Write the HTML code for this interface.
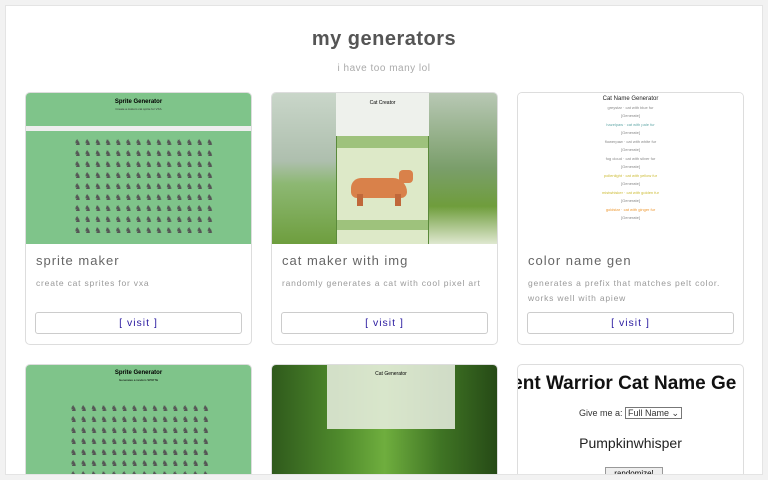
<!DOCTYPE html>
<html><head><style>
*{box-sizing:border-box;margin:0;padding:0}
html,body{width:768px;height:480px;overflow:hidden}
body{background:#f2f2f2;font-family:"Liberation Sans",sans-serif;position:relative}
.wrap{position:absolute;left:5px;top:5px;width:758px;height:470px;background:#fff;border:1px solid #e4e4e4;overflow:hidden}
h1{position:absolute;top:22px;left:0;width:100%;text-align:center;font-size:20px;color:#555;font-weight:bold;letter-spacing:0.5px}
.sub{position:absolute;top:57px;left:0;width:100%;text-align:center;font-size:10px;color:#aaa;letter-spacing:0.5px}
.card{position:absolute;width:227px;height:253px;border:1px solid #ddd;border-radius:5px;overflow:hidden;background:#fff}
.img{position:absolute;left:0;top:0;width:100%;height:151px;overflow:hidden}
.t{position:absolute;left:10px;top:160px;font-size:13px;color:#666;letter-spacing:1px}
.d{position:absolute;left:10px;top:183px;width:205px;font-size:8.5px;color:#999;letter-spacing:0.8px;line-height:15px}
.b{position:absolute;left:9px;top:219px;width:207px;height:22px;border:1px solid #ccc;border-radius:3px;text-align:center;line-height:20px;font-size:10.5px;color:#2a1aa0;letter-spacing:1px}
.sp{position:absolute;font-size:8px;color:#555;letter-spacing:3px;line-height:11px;white-space:pre}
</style></head><body>
<div class="wrap">
<h1>my generators</h1>
<div class="sub">i have too many lol</div>

<div class="card" style="left:19px;top:86px">
 <div class="img" style="background:#7fc48a">
  <div style="text-align:center;font-size:6px;font-weight:bold;margin-top:6px">Sprite Generator</div>
  <div style="text-align:center;font-size:3px;color:#333;margin-top:2px">Create a custom cat sprite for VXA</div>
  <div style="position:absolute;top:33px;left:0;width:100%;height:5px;background:#eee"></div>
  <div class="sp" style="left:48px;top:44px">♞♞♞♞♞♞♞♞♞♞♞♞♞♞
♞♞♞♞♞♞♞♞♞♞♞♞♞♞
♞♞♞♞♞♞♞♞♞♞♞♞♞♞
♞♞♞♞♞♞♞♞♞♞♞♞♞♞
♞♞♞♞♞♞♞♞♞♞♞♞♞♞
♞♞♞♞♞♞♞♞♞♞♞♞♞♞
♞♞♞♞♞♞♞♞♞♞♞♞♞♞
♞♞♞♞♞♞♞♞♞♞♞♞♞♞
♞♞♞♞♞♞♞♞♞♞♞♞♞♞</div>
 </div>
 <div class="t">sprite maker</div>
 <div class="d">create cat sprites for vxa</div>
 <div class="b">[ visit ]</div>
</div>

<div class="card" style="left:265px;top:86px">
 <div class="img" style="background:linear-gradient(#c9d6c9 0%,#aebfae 45%,#8db873 60%,#6e9e3e 100%)">
  <div style="position:absolute;left:156px;top:0;width:70px;height:151px;background:linear-gradient(#b8c8b4,#7a9e6a 50%,#6f9d3c 75%,#dfe8d0)"></div>
  <div style="position:absolute;left:64px;top:0;width:93px;height:43px;background:#eef1ec;text-align:center;font-size:5px;padding-top:7px">Cat Creator</div>
  <div style="position:absolute;left:64px;top:43px;width:93px;height:108px;background:#dde9c8;border-left:1px solid #5a8a3a;border-right:1px solid #5a8a3a">
   <div style="height:12px;background:#9ec27c"></div>
   <div style="position:absolute;left:14px;top:42px;width:56px;height:20px;background:#d9814a;border-radius:10px 14px 6px 6px"></div>
   <div style="position:absolute;left:62px;top:34px;width:14px;height:13px;background:#d9814a;border-radius:4px"></div>
   <div style="position:absolute;left:20px;top:58px;width:6px;height:12px;background:#c0683a"></div>
   <div style="position:absolute;left:58px;top:58px;width:6px;height:12px;background:#c0683a"></div>
   <div style="position:absolute;left:0;top:84px;width:100%;height:10px;background:#9ec27c"></div>
  </div>
 </div>
 <div class="t">cat maker with img</div>
 <div class="d">randomly generates a cat with cool pixel art</div>
 <div class="b">[ visit ]</div>
</div>

<div class="card" style="left:511px;top:86px">
 <div class="img" style="background:#fff;text-align:center;font-size:4px;line-height:8.5px;color:#888;padding-top:2px">
  <div style="font-size:6px;color:#222">Cat Name Generator</div>
  <div>greystar · cat with blue fur</div><div>[Generate]</div>
  <div style="color:#6aa">hazelpaw · cat with pale fur</div><div>[Generate]</div>
  <div>flowerpaw · cat with white fur</div><div>[Generate]</div>
  <div>fog cloud · cat with silver fur</div><div>[Generate]</div>
  <div style="color:#cb3">pollenlight · cat with yellow fur</div><div>[Generate]</div>
  <div style="color:#cb3">mistwhisker · cat with golden fur</div><div>[Generate]</div>
  <div style="color:#e93">goldstar · cat with ginger fur</div><div>[Generate]</div>
 </div>
 <div class="t">color name gen</div>
 <div class="d">generates a prefix that matches pelt color. works well with apiew</div>
 <div class="b">[ visit ]</div>
</div>

<div class="card" style="left:19px;top:358px;height:115px">
 <div class="img" style="background:#7fc48a">
  <div style="text-align:center;font-size:6px;font-weight:bold;margin-top:5px">Sprite Generator</div>
  <div style="text-align:center;font-size:3px;margin-top:2px">Generates a random SPRITE</div>
  <div class="sp" style="left:44px;top:38px">♞♞♞♞♞♞♞♞♞♞♞♞♞♞
♞♞♞♞♞♞♞♞♞♞♞♞♞♞
♞♞♞♞♞♞♞♞♞♞♞♞♞♞
♞♞♞♞♞♞♞♞♞♞♞♞♞♞
♞♞♞♞♞♞♞♞♞♞♞♞♞♞
♞♞♞♞♞♞♞♞♞♞♞♞♞♞
♞♞♞♞♞♞♞♞♞♞♞♞♞♞</div>
 </div>
</div>

<div class="card" style="left:265px;top:358px;height:115px">
 <div class="img" style="background:linear-gradient(90deg,#2f5a1c,#4f8a2c 30%,#6fae3e 50%,#3f7424 75%,#264a16)">
  <div style="position:absolute;left:55px;top:0;width:128px;height:64px;background:rgba(235,240,228,0.85);text-align:center;font-size:5px;padding-top:6px">Cat Generator</div>
 </div>
</div>

<div class="card" style="left:511px;top:358px;height:115px">
 <div style="position:absolute;left:-47px;top:8px;white-space:nowrap;font-size:19px;font-weight:bold;color:#111">Ancient Warrior Cat Name Ge</div>
 <div style="position:absolute;left:0;top:43px;width:100%;text-align:center;font-size:9px;color:#333">Give me a: <span style="border:1px solid #777;padding:0 2px;font-size:9px">Full Name ⌄</span></div>
 <div style="position:absolute;left:0;top:70px;width:100%;text-align:center;font-size:14px;color:#222">Pumpkinwhisper</div>
 <div style="position:absolute;left:87px;top:102px;width:58px;height:12px;border:1px solid #999;background:#eee;font-size:8px;text-align:center;line-height:11px">randomize!</div>
</div>
</div>
</body></html>
